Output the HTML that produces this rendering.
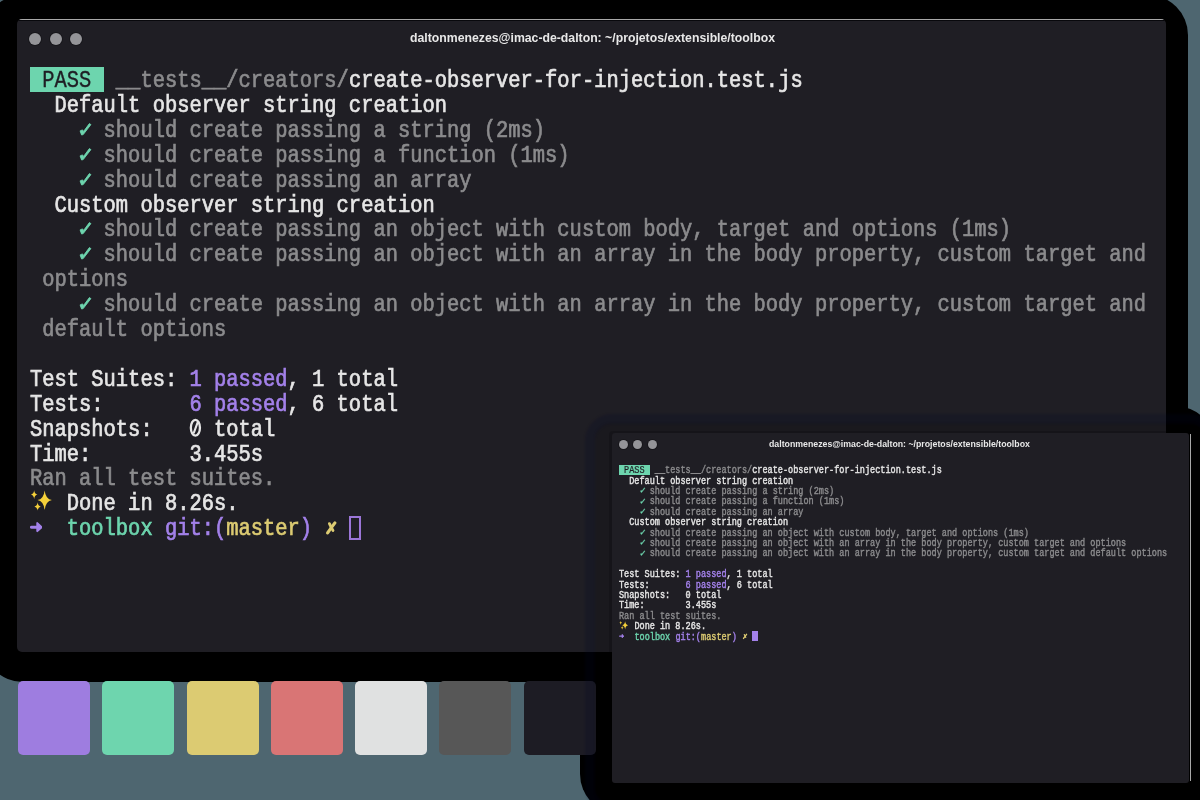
<!DOCTYPE html>
<html><head><meta charset="utf-8"><style>
html,body{margin:0;padding:0}
body{width:1200px;height:800px;overflow:hidden;position:relative;background:#000}
.ln{position:absolute;white-space:pre;font-family:"Liberation Mono", monospace;transform-origin:0 0}
.dot{position:absolute;border-radius:50%;background:#949498;box-shadow:0 0 0 1px rgba(0,0,0,0.25)}
.title{position:absolute;white-space:pre;font-family:"Liberation Sans", sans-serif;font-weight:bold;color:#e8e8e8;transform-origin:0 0}
</style></head><body>
<div style="position:absolute;left:0;top:0;width:1200px;height:800px;background:#4e6670"></div>
<div style="position:absolute;left:-17px;top:-5px;width:1205px;height:687px;border-radius:40px;background:#000"></div>
<div style="position:absolute;left:580px;top:406px;width:635px;height:408px;border-radius:40px;background:#000"></div>
<div style="position:absolute;left:18px;top:681px;width:72px;height:74px;border-radius:5px;background:#9e7de0"></div>
<div style="position:absolute;left:102px;top:681px;width:72px;height:74px;border-radius:5px;background:#6ed5ae"></div>
<div style="position:absolute;left:187px;top:681px;width:72px;height:74px;border-radius:5px;background:#dccb72"></div>
<div style="position:absolute;left:271px;top:681px;width:72px;height:74px;border-radius:5px;background:#d97575"></div>
<div style="position:absolute;left:355px;top:681px;width:72px;height:74px;border-radius:5px;background:#e0e1e1"></div>
<div style="position:absolute;left:439px;top:681px;width:72px;height:74px;border-radius:5px;background:#575757"></div>
<div style="position:absolute;left:524px;top:681px;width:72px;height:74px;border-radius:5px;background:#1d1c24"></div>
<div style="position:absolute;left:17px;top:19px;width:1149px;height:633px;border-radius:5px;background:#1f1e24;overflow:hidden">
  <div style="position:absolute;left:2px;right:2px;top:0;height:1px;background:#a8a8a8"></div><div style="position:absolute;left:0;right:0;top:1px;height:1px;background:#08080c"></div>
</div>
<div class="dot" style="left:29px;top:33px;width:12px;height:12px"></div>
<div class="dot" style="left:49.5px;top:33px;width:12px;height:12px"></div>
<div class="dot" style="left:70px;top:33px;width:12px;height:12px"></div>
<div class="title" style="left:410px;top:30.3px;font-size:13px;line-height:16px;transform:scaleX(0.9426)">daltonmenezes@imac-de-dalton: ~/projetos/extensible/toolbox</div>
<div style="position:absolute;left:30.00px;top:67.00px;width:73.57px;height:24.90px;background:#6dd5ae"></div>
<div class="ln" style="left:30.00px;top:69.06px;height:24.90px;line-height:24.90px;font-size:24px;transform:scaleX(0.85153)"><span style="color:#1f1e24;-webkit-text-stroke:0.35px #1f1e24"> PASS </span><span style="color:#e6e6e6;-webkit-text-stroke:0.7px #e6e6e6"> </span><span style="color:#8b8b8d;-webkit-text-stroke:0.7px #8b8b8d">__tests__/creators/</span><span style="color:#e6e6e6;-webkit-text-stroke:0.7px #e6e6e6">create-observer-for-injection.test.js</span></div>
<div class="ln" style="left:30.00px;top:93.96px;height:24.90px;line-height:24.90px;font-size:24px;transform:scaleX(0.85153)"><span style="color:#e6e6e6;-webkit-text-stroke:0.7px #e6e6e6">  Default observer string creation</span></div>
<svg style="position:absolute;left:79.05px;top:116.80px" width="14.71" height="24.90" viewBox="0 0 14.7 24.9" preserveAspectRatio="none"><path d="M1.1 13.9 L3.5 12.9 L4.6 14.4 L10.4 6.6 L11.9 7.6 L4.2 17.6 L2.6 18.0 Z" fill="#6dd5ae" stroke="#6dd5ae" stroke-width="0.9" stroke-linejoin="round"/></svg>
<div class="ln" style="left:30.00px;top:118.86px;height:24.90px;line-height:24.90px;font-size:24px;transform:scaleX(0.85153)"><span style="color:#8b8b8d;-webkit-text-stroke:0.7px #8b8b8d">    </span> <span style="color:#8b8b8d;-webkit-text-stroke:0.7px #8b8b8d"> should create passing a string (2ms)</span></div>
<svg style="position:absolute;left:79.05px;top:141.70px" width="14.71" height="24.90" viewBox="0 0 14.7 24.9" preserveAspectRatio="none"><path d="M1.1 13.9 L3.5 12.9 L4.6 14.4 L10.4 6.6 L11.9 7.6 L4.2 17.6 L2.6 18.0 Z" fill="#6dd5ae" stroke="#6dd5ae" stroke-width="0.9" stroke-linejoin="round"/></svg>
<div class="ln" style="left:30.00px;top:143.76px;height:24.90px;line-height:24.90px;font-size:24px;transform:scaleX(0.85153)"><span style="color:#8b8b8d;-webkit-text-stroke:0.7px #8b8b8d">    </span> <span style="color:#8b8b8d;-webkit-text-stroke:0.7px #8b8b8d"> should create passing a function (1ms)</span></div>
<svg style="position:absolute;left:79.05px;top:166.60px" width="14.71" height="24.90" viewBox="0 0 14.7 24.9" preserveAspectRatio="none"><path d="M1.1 13.9 L3.5 12.9 L4.6 14.4 L10.4 6.6 L11.9 7.6 L4.2 17.6 L2.6 18.0 Z" fill="#6dd5ae" stroke="#6dd5ae" stroke-width="0.9" stroke-linejoin="round"/></svg>
<div class="ln" style="left:30.00px;top:168.66px;height:24.90px;line-height:24.90px;font-size:24px;transform:scaleX(0.85153)"><span style="color:#8b8b8d;-webkit-text-stroke:0.7px #8b8b8d">    </span> <span style="color:#8b8b8d;-webkit-text-stroke:0.7px #8b8b8d"> should create passing an array</span></div>
<div class="ln" style="left:30.00px;top:193.56px;height:24.90px;line-height:24.90px;font-size:24px;transform:scaleX(0.85153)"><span style="color:#e6e6e6;-webkit-text-stroke:0.7px #e6e6e6">  Custom observer string creation</span></div>
<svg style="position:absolute;left:79.05px;top:216.40px" width="14.71" height="24.90" viewBox="0 0 14.7 24.9" preserveAspectRatio="none"><path d="M1.1 13.9 L3.5 12.9 L4.6 14.4 L10.4 6.6 L11.9 7.6 L4.2 17.6 L2.6 18.0 Z" fill="#6dd5ae" stroke="#6dd5ae" stroke-width="0.9" stroke-linejoin="round"/></svg>
<div class="ln" style="left:30.00px;top:218.46px;height:24.90px;line-height:24.90px;font-size:24px;transform:scaleX(0.85153)"><span style="color:#8b8b8d;-webkit-text-stroke:0.7px #8b8b8d">    </span> <span style="color:#8b8b8d;-webkit-text-stroke:0.7px #8b8b8d"> should create passing an object with custom body, target and options (1ms)</span></div>
<svg style="position:absolute;left:79.05px;top:241.30px" width="14.71" height="24.90" viewBox="0 0 14.7 24.9" preserveAspectRatio="none"><path d="M1.1 13.9 L3.5 12.9 L4.6 14.4 L10.4 6.6 L11.9 7.6 L4.2 17.6 L2.6 18.0 Z" fill="#6dd5ae" stroke="#6dd5ae" stroke-width="0.9" stroke-linejoin="round"/></svg>
<div class="ln" style="left:30.00px;top:243.36px;height:24.90px;line-height:24.90px;font-size:24px;transform:scaleX(0.85153)"><span style="color:#8b8b8d;-webkit-text-stroke:0.7px #8b8b8d">    </span> <span style="color:#8b8b8d;-webkit-text-stroke:0.7px #8b8b8d"> should create passing an object with an array in the body property, custom target and</span></div>
<div class="ln" style="left:30.00px;top:268.26px;height:24.90px;line-height:24.90px;font-size:24px;transform:scaleX(0.85153)"><span style="color:#8b8b8d;-webkit-text-stroke:0.7px #8b8b8d"> options</span></div>
<svg style="position:absolute;left:79.05px;top:291.10px" width="14.71" height="24.90" viewBox="0 0 14.7 24.9" preserveAspectRatio="none"><path d="M1.1 13.9 L3.5 12.9 L4.6 14.4 L10.4 6.6 L11.9 7.6 L4.2 17.6 L2.6 18.0 Z" fill="#6dd5ae" stroke="#6dd5ae" stroke-width="0.9" stroke-linejoin="round"/></svg>
<div class="ln" style="left:30.00px;top:293.16px;height:24.90px;line-height:24.90px;font-size:24px;transform:scaleX(0.85153)"><span style="color:#8b8b8d;-webkit-text-stroke:0.7px #8b8b8d">    </span> <span style="color:#8b8b8d;-webkit-text-stroke:0.7px #8b8b8d"> should create passing an object with an array in the body property, custom target and</span></div>
<div class="ln" style="left:30.00px;top:318.06px;height:24.90px;line-height:24.90px;font-size:24px;transform:scaleX(0.85153)"><span style="color:#8b8b8d;-webkit-text-stroke:0.7px #8b8b8d"> default options</span></div>
<div class="ln" style="left:30.00px;top:367.86px;height:24.90px;line-height:24.90px;font-size:24px;transform:scaleX(0.85153)"><span style="color:#e6e6e6;-webkit-text-stroke:0.7px #e6e6e6">Test Suites: </span><span style="color:#a381ea;-webkit-text-stroke:0.7px #a381ea">1 passed</span><span style="color:#e6e6e6;-webkit-text-stroke:0.7px #e6e6e6">, 1 total</span></div>
<div class="ln" style="left:30.00px;top:392.76px;height:24.90px;line-height:24.90px;font-size:24px;transform:scaleX(0.85153)"><span style="color:#e6e6e6;-webkit-text-stroke:0.7px #e6e6e6">Tests:       </span><span style="color:#a381ea;-webkit-text-stroke:0.7px #a381ea">6 passed</span><span style="color:#e6e6e6;-webkit-text-stroke:0.7px #e6e6e6">, 6 total</span></div>
<svg style="position:absolute;left:189.41px;top:415.60px" width="12.26" height="24.90" viewBox="0 0 12.262 24.9" preserveAspectRatio="none"><ellipse cx="6.4" cy="11.75" rx="4.55" ry="7.95" fill="none" stroke="#e6e6e6" stroke-width="2.3"/><path d="M8.6 6.6 L4.9 16.6" stroke="#e6e6e6" stroke-width="2.1" stroke-linecap="round"/></svg>
<div class="ln" style="left:30.00px;top:417.66px;height:24.90px;line-height:24.90px;font-size:24px;transform:scaleX(0.85153)"><span style="color:#e6e6e6;-webkit-text-stroke:0.7px #e6e6e6">Snapshots:   </span> <span style="color:#e6e6e6;-webkit-text-stroke:0.7px #e6e6e6"> total</span></div>
<div class="ln" style="left:30.00px;top:442.56px;height:24.90px;line-height:24.90px;font-size:24px;transform:scaleX(0.85153)"><span style="color:#e6e6e6;-webkit-text-stroke:0.7px #e6e6e6">Time:        </span><span style="color:#e6e6e6;-webkit-text-stroke:0.7px #e6e6e6">3.455s</span></div>
<div class="ln" style="left:30.00px;top:467.46px;height:24.90px;line-height:24.90px;font-size:24px;transform:scaleX(0.85153)"><span style="color:#8b8b8d;-webkit-text-stroke:0.7px #8b8b8d">Ran all test suites.</span></div>
<svg style="position:absolute;left:30.00px;top:490.30px" width="24.52" height="24.90" viewBox="0 0 24.5 24.9" preserveAspectRatio="none"><g fill="#f5d03a"><path d="M14.65 0.4 Q15.6 9.0 21.9 10.1 Q15.6 11.2 14.65 20.3 Q13.7 11.2 7.5 10.1 Q13.7 9.0 14.65 0.4Z"/><path d="M4.15 0.2 Q4.6 3.9 7.4 4.45 Q4.6 5.0 4.15 9.0 Q3.7 5.0 0.9 4.45 Q3.7 3.9 4.15 0.2Z"/><path d="M7.6 12.2 Q8.0 15.9 10.8 16.45 Q8.0 17.0 7.6 20.6 Q7.2 17.0 4.4 16.45 Q7.2 15.9 7.6 12.2Z"/></g></svg>
<div class="ln" style="left:30.00px;top:492.36px;height:24.90px;line-height:24.90px;font-size:24px;transform:scaleX(0.85153)">  <span style="color:#e6e6e6;-webkit-text-stroke:0.7px #e6e6e6"> Done in 8.26s.</span></div>
<svg style="position:absolute;left:30.00px;top:515.20px" width="12.26" height="24.90" viewBox="0 0 12.25 24.9" preserveAspectRatio="none"><path d="M1.5 12.3 L8 12.3" stroke="#a381ea" stroke-width="3.1" stroke-linecap="round"/><path d="M7.3 8.1 L11.6 12.3 L7.3 16.1 Z" fill="#a381ea" stroke="#a381ea" stroke-width="2" stroke-linejoin="round"/></svg>
<svg style="position:absolute;left:324.29px;top:515.20px" width="14.71" height="24.90" viewBox="0 0 14.7 24.9" preserveAspectRatio="none"><path d="M10.9 7.9 Q7 13 3.6 17.9" fill="none" stroke="#dccb72" stroke-width="3.2" stroke-linecap="round"/><path d="M5.4 8.6 Q7.2 12.5 9.0 15.5" fill="none" stroke="#dccb72" stroke-width="2.8" stroke-linecap="round"/></svg>
<div style="position:absolute;left:348.81px;top:515.50px;width:8.26px;height:20.90px;border:2px solid #9b76d8"></div>
<div class="ln" style="left:30.00px;top:517.26px;height:24.90px;line-height:24.90px;font-size:24px;transform:scaleX(0.85153)"> <span style="color:#e6e6e6;-webkit-text-stroke:0.7px #e6e6e6">  </span><span style="color:#6dd5ae;-webkit-text-stroke:0.7px #6dd5ae">toolbox</span><span style="color:#e6e6e6;-webkit-text-stroke:0.7px #e6e6e6"> </span><span style="color:#a381ea;-webkit-text-stroke:0.7px #a381ea">git:(</span><span style="color:#dccb72;-webkit-text-stroke:0.7px #dccb72">master</span><span style="color:#a381ea;-webkit-text-stroke:0.7px #a381ea">)</span><span style="color:#e6e6e6;-webkit-text-stroke:0.7px #e6e6e6"> </span> <span style="color:#e6e6e6;-webkit-text-stroke:0.7px #e6e6e6"> </span></div>
<div style="position:absolute;left:585px;top:413.5px;width:612px;height:380px;border:10px solid rgba(2,6,40,0.2);border-radius:27px;filter:blur(0.8px)"></div>
<div style="position:absolute;left:595.4px;top:423.4px;width:611.2px;height:383px;border-radius:16px;background:rgba(0,0,0,0.14);filter:blur(0.8px)"></div>
<div style="position:absolute;left:609px;top:431px;width:583px;height:356px;border-radius:4px;background:rgba(0,0,0,0.16);filter:blur(0.6px)"></div>
<div style="position:absolute;left:612px;top:432.5px;width:577px;height:350.3px;border-radius:3px;background:#1f1e24"></div>
<div style="position:absolute;left:1189.5px;top:434px;width:1.1px;height:347px;background:#a8a8a8"></div>
<div class="dot" style="left:618.5px;top:440px;width:9px;height:9px"></div>
<div class="dot" style="left:633px;top:440px;width:9px;height:9px"></div>
<div class="dot" style="left:647.5px;top:440px;width:9px;height:9px"></div>
<div class="title" style="left:769.3px;top:437.6px;font-size:9.3px;line-height:12px;transform:scaleX(0.942)">daltonmenezes@imac-de-dalton: ~/projetos/extensible/toolbox</div>
<div style="position:absolute;left:619.00px;top:464.50px;width:30.78px;height:10.40px;background:#6dd5ae"></div>
<div class="ln" style="left:619.00px;top:466.13px;height:10.40px;line-height:10.40px;font-size:10.03px;transform:scaleX(0.85244)"><span style="color:#1f1e24;-webkit-text-stroke:0.20px #1f1e24"> PASS </span><span style="color:#e6e6e6;-webkit-text-stroke:0.4px #e6e6e6"> </span><span style="color:#8b8b8d;-webkit-text-stroke:0.4px #8b8b8d">__tests__/creators/</span><span style="color:#e6e6e6;-webkit-text-stroke:0.4px #e6e6e6">create-observer-for-injection.test.js</span></div>
<div class="ln" style="left:619.00px;top:476.53px;height:10.40px;line-height:10.40px;font-size:10.03px;transform:scaleX(0.85244)"><span style="color:#e6e6e6;-webkit-text-stroke:0.4px #e6e6e6">  Default observer string creation</span></div>
<svg style="position:absolute;left:639.52px;top:485.30px" width="6.16" height="10.40" viewBox="0 0 14.7 24.9" preserveAspectRatio="none"><path d="M1.1 13.9 L3.5 12.9 L4.6 14.4 L10.4 6.6 L11.9 7.6 L4.2 17.6 L2.6 18.0 Z" fill="#6dd5ae" stroke="#6dd5ae" stroke-width="0.9" stroke-linejoin="round"/></svg>
<div class="ln" style="left:619.00px;top:486.93px;height:10.40px;line-height:10.40px;font-size:10.03px;transform:scaleX(0.85244)"><span style="color:#8b8b8d;-webkit-text-stroke:0.4px #8b8b8d">    </span> <span style="color:#8b8b8d;-webkit-text-stroke:0.4px #8b8b8d"> should create passing a string (2ms)</span></div>
<svg style="position:absolute;left:639.52px;top:495.70px" width="6.16" height="10.40" viewBox="0 0 14.7 24.9" preserveAspectRatio="none"><path d="M1.1 13.9 L3.5 12.9 L4.6 14.4 L10.4 6.6 L11.9 7.6 L4.2 17.6 L2.6 18.0 Z" fill="#6dd5ae" stroke="#6dd5ae" stroke-width="0.9" stroke-linejoin="round"/></svg>
<div class="ln" style="left:619.00px;top:497.33px;height:10.40px;line-height:10.40px;font-size:10.03px;transform:scaleX(0.85244)"><span style="color:#8b8b8d;-webkit-text-stroke:0.4px #8b8b8d">    </span> <span style="color:#8b8b8d;-webkit-text-stroke:0.4px #8b8b8d"> should create passing a function (1ms)</span></div>
<svg style="position:absolute;left:639.52px;top:506.10px" width="6.16" height="10.40" viewBox="0 0 14.7 24.9" preserveAspectRatio="none"><path d="M1.1 13.9 L3.5 12.9 L4.6 14.4 L10.4 6.6 L11.9 7.6 L4.2 17.6 L2.6 18.0 Z" fill="#6dd5ae" stroke="#6dd5ae" stroke-width="0.9" stroke-linejoin="round"/></svg>
<div class="ln" style="left:619.00px;top:507.73px;height:10.40px;line-height:10.40px;font-size:10.03px;transform:scaleX(0.85244)"><span style="color:#8b8b8d;-webkit-text-stroke:0.4px #8b8b8d">    </span> <span style="color:#8b8b8d;-webkit-text-stroke:0.4px #8b8b8d"> should create passing an array</span></div>
<div class="ln" style="left:619.00px;top:518.13px;height:10.40px;line-height:10.40px;font-size:10.03px;transform:scaleX(0.85244)"><span style="color:#e6e6e6;-webkit-text-stroke:0.4px #e6e6e6">  Custom observer string creation</span></div>
<svg style="position:absolute;left:639.52px;top:526.90px" width="6.16" height="10.40" viewBox="0 0 14.7 24.9" preserveAspectRatio="none"><path d="M1.1 13.9 L3.5 12.9 L4.6 14.4 L10.4 6.6 L11.9 7.6 L4.2 17.6 L2.6 18.0 Z" fill="#6dd5ae" stroke="#6dd5ae" stroke-width="0.9" stroke-linejoin="round"/></svg>
<div class="ln" style="left:619.00px;top:528.53px;height:10.40px;line-height:10.40px;font-size:10.03px;transform:scaleX(0.85244)"><span style="color:#8b8b8d;-webkit-text-stroke:0.4px #8b8b8d">    </span> <span style="color:#8b8b8d;-webkit-text-stroke:0.4px #8b8b8d"> should create passing an object with custom body, target and options (1ms)</span></div>
<svg style="position:absolute;left:639.52px;top:537.30px" width="6.16" height="10.40" viewBox="0 0 14.7 24.9" preserveAspectRatio="none"><path d="M1.1 13.9 L3.5 12.9 L4.6 14.4 L10.4 6.6 L11.9 7.6 L4.2 17.6 L2.6 18.0 Z" fill="#6dd5ae" stroke="#6dd5ae" stroke-width="0.9" stroke-linejoin="round"/></svg>
<div class="ln" style="left:619.00px;top:538.93px;height:10.40px;line-height:10.40px;font-size:10.03px;transform:scaleX(0.85244)"><span style="color:#8b8b8d;-webkit-text-stroke:0.4px #8b8b8d">    </span> <span style="color:#8b8b8d;-webkit-text-stroke:0.4px #8b8b8d"> should create passing an object with an array in the body property, custom target and options</span></div>
<svg style="position:absolute;left:639.52px;top:547.70px" width="6.16" height="10.40" viewBox="0 0 14.7 24.9" preserveAspectRatio="none"><path d="M1.1 13.9 L3.5 12.9 L4.6 14.4 L10.4 6.6 L11.9 7.6 L4.2 17.6 L2.6 18.0 Z" fill="#6dd5ae" stroke="#6dd5ae" stroke-width="0.9" stroke-linejoin="round"/></svg>
<div class="ln" style="left:619.00px;top:549.33px;height:10.40px;line-height:10.40px;font-size:10.03px;transform:scaleX(0.85244)"><span style="color:#8b8b8d;-webkit-text-stroke:0.4px #8b8b8d">    </span> <span style="color:#8b8b8d;-webkit-text-stroke:0.4px #8b8b8d"> should create passing an object with an array in the body property, custom target and default options</span></div>
<div class="ln" style="left:619.00px;top:570.13px;height:10.40px;line-height:10.40px;font-size:10.03px;transform:scaleX(0.85244)"><span style="color:#e6e6e6;-webkit-text-stroke:0.4px #e6e6e6">Test Suites: </span><span style="color:#a381ea;-webkit-text-stroke:0.4px #a381ea">1 passed</span><span style="color:#e6e6e6;-webkit-text-stroke:0.4px #e6e6e6">, 1 total</span></div>
<div class="ln" style="left:619.00px;top:580.53px;height:10.40px;line-height:10.40px;font-size:10.03px;transform:scaleX(0.85244)"><span style="color:#e6e6e6;-webkit-text-stroke:0.4px #e6e6e6">Tests:       </span><span style="color:#a381ea;-webkit-text-stroke:0.4px #a381ea">6 passed</span><span style="color:#e6e6e6;-webkit-text-stroke:0.4px #e6e6e6">, 6 total</span></div>
<div class="ln" style="left:619.00px;top:590.93px;height:10.40px;line-height:10.40px;font-size:10.03px;transform:scaleX(0.85244)"><span style="color:#e6e6e6;-webkit-text-stroke:0.4px #e6e6e6">Snapshots:   </span><span style="color:#e6e6e6;-webkit-text-stroke:0.4px #e6e6e6">0</span><span style="color:#e6e6e6;-webkit-text-stroke:0.4px #e6e6e6"> total</span></div>
<div class="ln" style="left:619.00px;top:601.33px;height:10.40px;line-height:10.40px;font-size:10.03px;transform:scaleX(0.85244)"><span style="color:#e6e6e6;-webkit-text-stroke:0.4px #e6e6e6">Time:        </span><span style="color:#e6e6e6;-webkit-text-stroke:0.4px #e6e6e6">3.455s</span></div>
<div class="ln" style="left:619.00px;top:611.73px;height:10.40px;line-height:10.40px;font-size:10.03px;transform:scaleX(0.85244)"><span style="color:#8b8b8d;-webkit-text-stroke:0.4px #8b8b8d">Ran all test suites.</span></div>
<svg style="position:absolute;left:619.00px;top:620.50px" width="10.26" height="10.40" viewBox="0 0 24.5 24.9" preserveAspectRatio="none"><g fill="#f5d03a"><path d="M14.65 0.4 Q15.6 9.0 21.9 10.1 Q15.6 11.2 14.65 20.3 Q13.7 11.2 7.5 10.1 Q13.7 9.0 14.65 0.4Z"/><path d="M4.15 0.2 Q4.6 3.9 7.4 4.45 Q4.6 5.0 4.15 9.0 Q3.7 5.0 0.9 4.45 Q3.7 3.9 4.15 0.2Z"/><path d="M7.6 12.2 Q8.0 15.9 10.8 16.45 Q8.0 17.0 7.6 20.6 Q7.2 17.0 4.4 16.45 Q7.2 15.9 7.6 12.2Z"/></g></svg>
<div class="ln" style="left:619.00px;top:622.13px;height:10.40px;line-height:10.40px;font-size:10.03px;transform:scaleX(0.85244)">  <span style="color:#e6e6e6;-webkit-text-stroke:0.4px #e6e6e6"> Done in 8.26s.</span></div>
<svg style="position:absolute;left:619.00px;top:630.90px" width="5.13" height="10.40" viewBox="0 0 12.25 24.9" preserveAspectRatio="none"><path d="M1.5 12.3 L8 12.3" stroke="#a381ea" stroke-width="3.1" stroke-linecap="round"/><path d="M7.3 8.1 L11.6 12.3 L7.3 16.1 Z" fill="#a381ea" stroke="#a381ea" stroke-width="2" stroke-linejoin="round"/></svg>
<svg style="position:absolute;left:742.12px;top:630.90px" width="6.16" height="10.40" viewBox="0 0 14.7 24.9" preserveAspectRatio="none"><path d="M10.9 7.9 Q7 13 3.6 17.9" fill="none" stroke="#dccb72" stroke-width="3.2" stroke-linecap="round"/><path d="M5.4 8.6 Q7.2 12.5 9.0 15.5" fill="none" stroke="#dccb72" stroke-width="2.8" stroke-linecap="round"/></svg>
<div style="position:absolute;left:752.38px;top:630.90px;width:5.13px;height:10.40px;background:#a381ea"></div>
<div class="ln" style="left:619.00px;top:632.53px;height:10.40px;line-height:10.40px;font-size:10.03px;transform:scaleX(0.85244)"> <span style="color:#e6e6e6;-webkit-text-stroke:0.4px #e6e6e6">  </span><span style="color:#6dd5ae;-webkit-text-stroke:0.4px #6dd5ae">toolbox</span><span style="color:#e6e6e6;-webkit-text-stroke:0.4px #e6e6e6"> </span><span style="color:#a381ea;-webkit-text-stroke:0.4px #a381ea">git:(</span><span style="color:#dccb72;-webkit-text-stroke:0.4px #dccb72">master</span><span style="color:#a381ea;-webkit-text-stroke:0.4px #a381ea">)</span><span style="color:#e6e6e6;-webkit-text-stroke:0.4px #e6e6e6"> </span> <span style="color:#e6e6e6;-webkit-text-stroke:0.4px #e6e6e6"> </span></div>
</body></html>
